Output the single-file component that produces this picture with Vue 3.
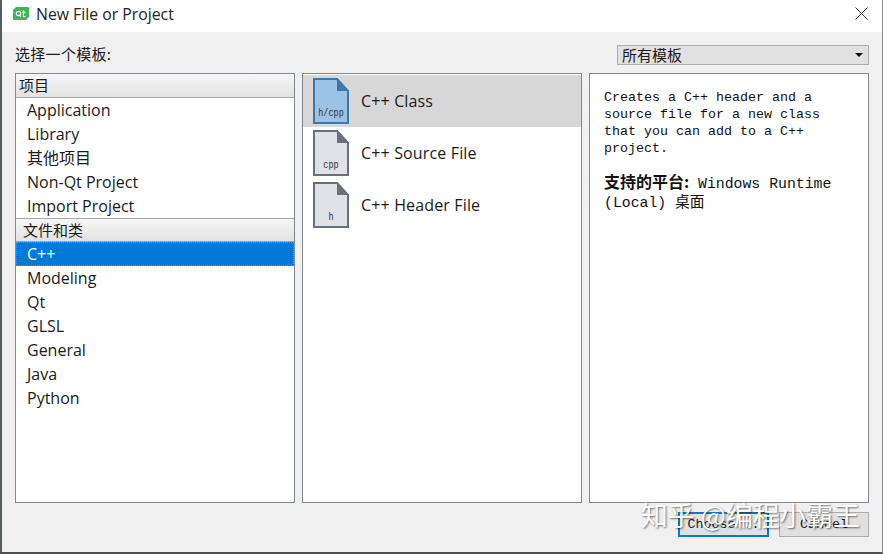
<script setup>
const group1 = ['Application', 'Library', '其他项目', 'Non-Qt Project', 'Import Project']
const group2 = ['C++', 'Modeling', 'Qt', 'GLSL', 'General', 'Java', 'Python']
const files = [
  { name: 'C++ Class', tag: 'h/cpp', active: true },
  { name: 'C++ Source File', tag: 'cpp', active: false },
  { name: 'C++ Header File', tag: 'h', active: false },
]
</script>

<template>
  <div class="window">
    <header class="titlebar">
      <div class="title-left">
        <svg class="qt" width="16" height="14" viewBox="0 0 16 14">
          <path d="M3 0H15a1 1 0 0 1 1 1V10L13 13H1a1 1 0 0 1-1-1V3Z" fill="#41b45a" />
          <circle cx="5.5" cy="6.5" r="2.2" fill="none" stroke="#fff" stroke-width="1.2" />
          <path d="M7 8.5 8 10M10.5 3.5V9.5H12.5M9.2 5.2H12.5" fill="none" stroke="#fff" stroke-width="1.1" />
        </svg>
        <span class="title">New File or Project</span>
      </div>
      <svg class="close" width="13" height="13" viewBox="0 0 13 13">
        <path d="M.5.5 12.5 12.5M12.5.5.5 12.5" stroke="#333" stroke-width="1" fill="none" />
      </svg>
    </header>

    <main class="body">
      <div class="toprow">
        <span class="choose-label">选择一个模板:</span>
        <div class="combo">
          <span>所有模板</span>
          <i class="arrow"></i>
        </div>
      </div>

      <div class="panels">
        <section class="panel left">
          <div class="group first">项目</div>
          <div v-for="item in group1" :key="item" class="item">{{ item }}</div>
          <div class="group second">文件和类</div>
          <div
            v-for="(item, i) in group2"
            :key="item"
            class="item"
            :class="{ selected: i === 0 }"
          >{{ item }}</div>
        </section>

        <section class="panel middle">
          <div v-for="f in files" :key="f.name" class="file" :class="{ on: f.active }">
            <div class="doc">
              <svg width="36" height="46" viewBox="0 0 36 46">
                <path
                  d="M1 1H24L35 13V45H1Z"
                  :fill="f.active ? '#9cc3e6' : '#dfe1e6'"
                  :stroke="f.active ? '#3f76a8' : '#6b6f7b'"
                  stroke-width="2"
                />
                <path d="M24 0 36 13H24Z" :fill="f.active ? '#3f76a8' : '#6b6f7b'" />
              </svg>
              <span class="tag">{{ f.tag }}</span>
            </div>
            <span class="file-name">{{ f.name }}</span>
          </div>
        </section>

        <section class="panel right">
          <p class="desc">Creates a C++ header and a source file for a new class that you can add to a C++ project.</p>
          <p class="platform"><b>支持的平台:</b> <span>Windows Runtime (Local)</span> 桌面</p>
        </section>
      </div>

      <div class="buttons">
        <div class="btn primary">Choose...</div>
        <div class="btn">Cancel</div>
      </div>
    </main>

    <div class="watermark">知乎 @编程小霸王</div>
  </div>
</template>

<style scoped>
.window {
  position: relative;
  width: 883px;
  height: 554px;
  box-sizing: border-box;
  border-left: 2px solid #555c60;
  border-bottom: 2px solid #4a4f52;
  border-right: 1px solid #8a8a8a;
  background: #f0f0f0;
  display: flex;
  flex-direction: column;
  overflow: hidden;
  font-family: "Open Sans", "Noto Sans CJK SC", sans-serif;
  color: #1a1a1a;
}
.titlebar {
  height: 32px;
  box-sizing: border-box;
  flex: none;
  background: #fff;
  display: flex;
  align-items: center;
  justify-content: space-between;
  padding: 0 14px 5px 11px;
}
.title-left {
  display: flex;
  align-items: center;
  gap: 7px;
}
.title {
  font-size: 15.8px;
  color: #222;
}
.body {
  flex: 1;
  display: flex;
  flex-direction: column;
  padding: 13px 13px 0 13px;
  min-height: 0;
}
.toprow {
  height: 20px;
  display: flex;
  align-items: center;
  justify-content: space-between;
  margin-bottom: 8px;
}
.choose-label {
  font-size: 15px;
  letter-spacing: 0.3px;
  padding-bottom: 3px;
  font-family: "Noto Sans CJK SC", sans-serif;
}
.combo {
  width: 252px;
  height: 20px;
  box-sizing: border-box;
  border: 1px solid #adadad;
  background: #e1e1e1;
  font-size: 15px;
  padding: 0 4px 2px;
  display: flex;
  align-items: center;
  justify-content: space-between;
  font-family: "Noto Sans CJK SC", sans-serif;
}
.arrow {
  width: 0;
  height: 0;
  border-left: 4px solid transparent;
  border-right: 4px solid transparent;
  border-top: 4px solid #111;
  margin: 2px 1px 0 0;
}
.panels {
  display: flex;
  height: 430px;
  flex: none;
}
.panel {
  box-sizing: border-box;
  height: 100%;
  border: 1px solid #828790;
  background: #fff;
}
.left {
  width: 280px;
  margin-right: 7px;
}
.middle {
  width: 280px;
  margin-right: 7px;
  padding-top: 1px;
}
.right {
  width: 280px;
  padding: 15px 30px 15px 14px;
}
.group {
  height: 24px;
  box-sizing: border-box;
  padding-left: 3px;
  font-size: 15px;
  line-height: 22px;
  font-family: "Noto Sans CJK SC", sans-serif;
  background: linear-gradient(#f7f7f7, #e2e2e2);
  border-bottom: 1px solid #a8a8a8;
}
.group.second {
  border-top: 1px solid #a8a8a8;
  padding-left: 7px;
}
.item {
  height: 24px;
  line-height: 24px;
  padding-left: 11px;
  font-size: 16px;
  font-family: "Open Sans", "Noto Sans CJK SC", sans-serif;
}
.item.selected {
  background: #0078d7;
  color: #fff;
  outline: 1px dotted #7a8a9a;
  outline-offset: -1px;
}
.file {
  height: 52px;
  display: flex;
  align-items: center;
  padding-left: 10px;
}
.file.on {
  background: #d7d7d7;
}
.doc {
  position: relative;
  width: 36px;
  height: 46px;
}
.doc svg {
  display: block;
}
.tag {
  position: absolute;
  left: 0;
  right: 0;
  bottom: 4px;
  text-align: center;
  font-size: 10px;
  line-height: 12px;
  color: #333;
  font-family: "Liberation Mono", monospace;
  transform: scaleX(0.85);
}
.file-name {
  margin-left: 12px;
  font-size: 16px;
  letter-spacing: 0.15px;
}
.desc {
  margin: 0;
  font-family: "Liberation Mono", monospace;
  font-size: 13.33px;
  line-height: 17px;
  color: #111;
}
.platform {
  margin: 15px 0 0;
  font-family: "Liberation Mono", "Noto Sans CJK SC", monospace;
  font-size: 14.8px;
  line-height: 19px;
  color: #111;
}
.platform b {
  font-family: "Noto Sans CJK SC", sans-serif;
  font-size: 16px;
  font-weight: 700;
}
.buttons {
  display: flex;
  justify-content: flex-end;
  gap: 10px;
  margin-top: 9px;
}
.btn {
  width: 90px;
  height: 25px;
  box-sizing: border-box;
  border: 1px solid #adadad;
  background: #e1e1e1;
  text-align: center;
  font-family: "Liberation Mono", monospace;
  font-size: 13.33px;
  line-height: 23px;
}
.btn.primary {
  width: 91px;
  border: 2px solid #0078d7;
  line-height: 21px;
}
.watermark {
  position: absolute;
  left: 639px;
  top: 497px;
  font-family: "Noto Sans CJK SC", sans-serif;
  font-size: 26.8px;
  line-height: 36px;
  color: #fff;
  white-space: nowrap;
  text-shadow: 1px 1px 2px rgba(0, 0, 0, 0.55);
}
</style>

<style>
html, body {
  margin: 0;
  background: #fff;
}
</style>
